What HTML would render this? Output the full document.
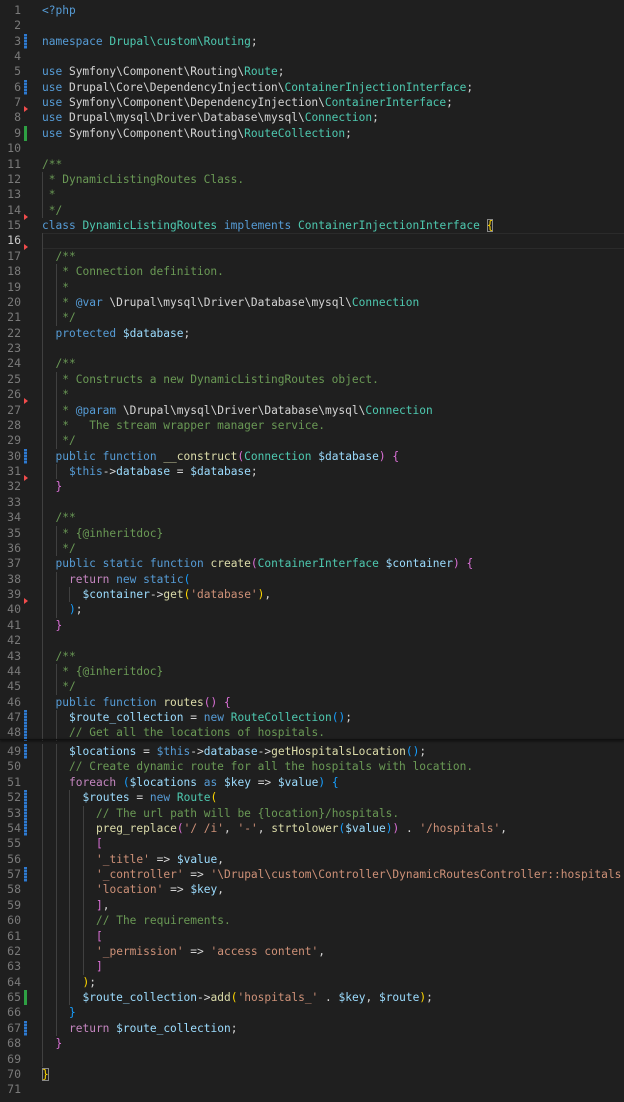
<!DOCTYPE html>
<html><head><meta charset="utf-8"><style>
html,body{margin:0;padding:0;background:#1f1f1f;width:624px;height:1102px;overflow:hidden;position:relative}
.blk{position:absolute;left:0;right:0}
.l{position:relative;height:15.38px;line-height:15.38px;font-family:"DejaVu Sans Mono","Liberation Mono",monospace;font-size:11.2px;white-space:pre;color:#d4d4d4}
.n{position:absolute;left:0;width:21px;text-align:right;color:#7a7a7a;font-size:11.5px}
.code{position:absolute;left:42px;top:0}
i{display:inline-block;height:15.38px;vertical-align:top;box-shadow:inset 1px 0 0 #404040}
i.g{width:13.5px}i.h{width:6.75px}
.k{color:#569cd6}.c{color:#4ec9b0}.m{color:#6a9955}.v{color:#9cdcfe}.f{color:#dcdcaa}.s{color:#ce9178}.p{color:#c586c0}
.y{color:#ffd700}.o{color:#da70d6}.b{color:#179fff}.w{color:#d4d4d4}
.bx{outline:1px solid #888;outline-offset:-1px}
.mk{position:absolute;left:24px;width:3px;height:15.38px;top:0}
.mb{background:repeating-linear-gradient(180deg,#2f7ad0 0 2px,#1f4a7a 2px 3px)}
.mg{background:#2ea043}
.tri{position:absolute;left:24px;width:0;height:0;border-left:4px solid #f14c4c;border-top:3px solid transparent;border-bottom:3px solid transparent}
.cur{position:absolute;left:42px;right:0;top:0;height:15.38px;box-sizing:border-box;border:1px solid #2b2b2b;border-right:none}
</style></head><body>
<div class="blk" style="top:2.8px">
<div class="l"><span class="n">1</span><span class="code"><span class="k">&lt;?php</span></span></div>
<div class="l"><span class="n">2</span></div>
<div class="l"><span class="n">3</span><span class="mk mb"></span><span class="code"><span class="k">namespace</span> <span class="c">Drupal\custom\Routing</span>;</span></div>
<div class="l"><span class="n">4</span></div>
<div class="l"><span class="n">5</span><span class="code"><span class="k">use</span> Symfony\Component\Routing\<span class="c">Route</span>;</span></div>
<div class="l"><span class="n">6</span><span class="mk mb"></span><span class="code"><span class="k">use</span> Drupal\Core\DependencyInjection\<span class="c">ContainerInjectionInterface</span>;</span></div>
<div class="l"><span class="n">7</span><span class="code"><span class="k">use</span> Symfony\Component\DependencyInjection\<span class="c">ContainerInterface</span>;</span><span class="tri" style="top:11px"></span></div>
<div class="l"><span class="n">8</span><span class="code"><span class="k">use</span> Drupal\mysql\Driver\Database\mysql\<span class="c">Connection</span>;</span></div>
<div class="l"><span class="n">9</span><span class="mk mg"></span><span class="code"><span class="k">use</span> Symfony\Component\Routing\<span class="c">RouteCollection</span>;</span></div>
<div class="l"><span class="n">10</span></div>
<div class="l"><span class="n">11</span><span class="code m">/**</span></div>
<div class="l"><span class="n">12</span><span class="code m"><i class="h"></i>* DynamicListingRoutes Class.</span></div>
<div class="l"><span class="n">13</span><span class="code m"><i class="h"></i>*</span></div>
<div class="l"><span class="n">14</span><span class="code m"><i class="h"></i>*/</span><span class="tri" style="top:11px"></span></div>
<div class="l"><span class="n">15</span><span class="code"><span class="k">class</span> <span class="c">DynamicListingRoutes</span> <span class="k">implements</span> <span class="c">ContainerInjectionInterface</span> <span class="y bx">{</span></span></div>
<div class="l"><span class="cur"></span><span class="n" style="color:#cccccc">16</span><span class="code"><i class="g"></i></span><span class="tri" style="top:11px"></span></div>
<div class="l"><span class="n">17</span><span class="code"><i class="g"></i><span class="m">/**</span></span></div>
<div class="l"><span class="n">18</span><span class="code"><i class="g"></i><i class="h"></i><span class="m">* Connection definition.</span></span></div>
<div class="l"><span class="n">19</span><span class="code"><i class="g"></i><i class="h"></i><span class="m">*</span></span></div>
<div class="l"><span class="n">20</span><span class="code"><i class="g"></i><i class="h"></i><span class="m">* </span><span class="k">@var</span> \Drupal\mysql\Driver\Database\mysql\<span class="c">Connection</span></span></div>
<div class="l"><span class="n">21</span><span class="code"><i class="g"></i><i class="h"></i><span class="m">*/</span></span></div>
<div class="l"><span class="n">22</span><span class="code"><i class="g"></i><span class="k">protected</span> <span class="v">$database</span>;</span></div>
<div class="l"><span class="n">23</span><span class="code"><i class="g"></i></span></div>
<div class="l"><span class="n">24</span><span class="code"><i class="g"></i><span class="m">/**</span></span></div>
<div class="l"><span class="n">25</span><span class="code"><i class="g"></i><i class="h"></i><span class="m">* Constructs a new DynamicListingRoutes object.</span></span></div>
<div class="l"><span class="n">26</span><span class="code"><i class="g"></i><i class="h"></i><span class="m">*</span></span><span class="tri" style="top:11px"></span></div>
<div class="l"><span class="n">27</span><span class="code"><i class="g"></i><i class="h"></i><span class="m">* </span><span class="k">@param</span> \Drupal\mysql\Driver\Database\mysql\<span class="c">Connection</span></span></div>
<div class="l"><span class="n">28</span><span class="code"><i class="g"></i><i class="h"></i><span class="m">*   The stream wrapper manager service.</span></span></div>
<div class="l"><span class="n">29</span><span class="code"><i class="g"></i><i class="h"></i><span class="m">*/</span></span></div>
<div class="l"><span class="n">30</span><span class="mk mb"></span><span class="code"><i class="g"></i><span class="k">public</span> <span class="k">function</span> <span class="f">__construct</span><span class="o">(</span><span class="c">Connection</span> <span class="v">$database</span><span class="o">)</span> <span class="o">{</span></span></div>
<div class="l"><span class="n">31</span><span class="code"><i class="g"></i><i class="g"></i><span class="k">$this</span>-&gt;<span class="v">database</span> = <span class="v">$database</span>;</span><span class="tri" style="top:11px"></span></div>
<div class="l"><span class="n">32</span><span class="code"><i class="g"></i><span class="o">}</span></span></div>
<div class="l"><span class="n">33</span><span class="code"><i class="g"></i></span></div>
<div class="l"><span class="n">34</span><span class="code"><i class="g"></i><span class="m">/**</span></span></div>
<div class="l"><span class="n">35</span><span class="code"><i class="g"></i><i class="h"></i><span class="m">* {@inheritdoc}</span></span></div>
<div class="l"><span class="n">36</span><span class="code"><i class="g"></i><i class="h"></i><span class="m">*/</span></span></div>
<div class="l"><span class="n">37</span><span class="code"><i class="g"></i><span class="k">public</span> <span class="k">static</span> <span class="k">function</span> <span class="f">create</span><span class="o">(</span><span class="c">ContainerInterface</span> <span class="v">$container</span><span class="o">)</span> <span class="o">{</span></span></div>
<div class="l"><span class="n">38</span><span class="code"><i class="g"></i><i class="g"></i><span class="p">return</span> <span class="k">new</span> <span class="k">static</span><span class="b">(</span></span></div>
<div class="l"><span class="n">39</span><span class="code"><i class="g"></i><i class="g"></i><i class="g"></i><span class="v">$container</span>-&gt;<span class="f">get</span><span class="y">(</span><span class="s">'database'</span><span class="y">)</span>,</span><span class="tri" style="top:11px"></span></div>
<div class="l"><span class="n">40</span><span class="code"><i class="g"></i><i class="g"></i><span class="b">)</span>;</span></div>
<div class="l"><span class="n">41</span><span class="code"><i class="g"></i><span class="o">}</span></span></div>
<div class="l"><span class="n">42</span><span class="code"><i class="g"></i></span></div>
<div class="l"><span class="n">43</span><span class="code"><i class="g"></i><span class="m">/**</span></span></div>
<div class="l"><span class="n">44</span><span class="code"><i class="g"></i><i class="h"></i><span class="m">* {@inheritdoc}</span></span></div>
<div class="l"><span class="n">45</span><span class="code"><i class="g"></i><i class="h"></i><span class="m">*/</span></span></div>
<div class="l"><span class="n">46</span><span class="code"><i class="g"></i><span class="k">public</span> <span class="k">function</span> <span class="f">routes</span><span class="o">()</span> <span class="o">{</span></span></div>
<div class="l"><span class="n">47</span><span class="mk mb"></span><span class="code"><i class="g"></i><i class="g"></i><span class="v">$route_collection</span> = <span class="k">new</span> <span class="c">RouteCollection</span><span class="b">()</span>;</span></div>
<div class="l"><span class="n">48</span><span class="mk mb"></span><span class="code"><i class="g"></i><i class="g"></i><span class="m">// Get all the locations of hospitals.</span></span></div>
</div>
<div style="position:absolute;left:0;right:0;top:739px;height:1px;background:#111;box-shadow:0 1px 2px #000"></div>
<div class="blk" style="top:744px">
<div class="l"><span class="n">49</span><span class="mk mb"></span><span class="code"><i class="g"></i><i class="g"></i><span class="v">$locations</span> = <span class="k">$this</span>-&gt;<span class="v">database</span>-&gt;<span class="f">getHospitalsLocation</span><span class="b">()</span>;</span></div>
<div class="l"><span class="n">50</span><span class="code"><i class="g"></i><i class="g"></i><span class="m">// Create dynamic route for all the hospitals with location.</span></span></div>
<div class="l"><span class="n">51</span><span class="code"><i class="g"></i><i class="g"></i><span class="p">foreach</span> <span class="b">(</span><span class="v">$locations</span> <span class="k">as</span> <span class="v">$key</span> =&gt; <span class="v">$value</span><span class="b">)</span> <span class="b">{</span></span></div>
<div class="l"><span class="n">52</span><span class="mk mb"></span><span class="code"><i class="g"></i><i class="g"></i><i class="g"></i><span class="v">$routes</span> = <span class="k">new</span> <span class="c">Route</span><span class="y">(</span></span></div>
<div class="l"><span class="n">53</span><span class="mk mb"></span><span class="code"><i class="g"></i><i class="g"></i><i class="g"></i><i class="g"></i><span class="m">// The url path will be {location}/hospitals.</span></span></div>
<div class="l"><span class="n">54</span><span class="mk mb"></span><span class="code"><i class="g"></i><i class="g"></i><i class="g"></i><i class="g"></i><span class="f">preg_replace</span><span class="o">(</span><span class="s">'/ /i'</span>, <span class="s">'-'</span>, <span class="f">strtolower</span><span class="b">(</span><span class="v">$value</span><span class="b">)</span><span class="o">)</span> . <span class="s">'/hospitals'</span>,</span></div>
<div class="l"><span class="n">55</span><span class="code"><i class="g"></i><i class="g"></i><i class="g"></i><i class="g"></i><span class="o">[</span></span></div>
<div class="l"><span class="n">56</span><span class="code"><i class="g"></i><i class="g"></i><i class="g"></i><i class="g"></i><span class="s">'_title'</span> =&gt; <span class="v">$value</span>,</span></div>
<div class="l"><span class="n">57</span><span class="mk mb"></span><span class="code"><i class="g"></i><i class="g"></i><i class="g"></i><i class="g"></i><span class="s">'_controller'</span> =&gt; <span class="s">'\Drupal\custom\Controller\DynamicRoutesController::hospitals'</span>,</span></div>
<div class="l"><span class="n">58</span><span class="code"><i class="g"></i><i class="g"></i><i class="g"></i><i class="g"></i><span class="s">'location'</span> =&gt; <span class="v">$key</span>,</span></div>
<div class="l"><span class="n">59</span><span class="code"><i class="g"></i><i class="g"></i><i class="g"></i><i class="g"></i><span class="o">]</span>,</span></div>
<div class="l"><span class="n">60</span><span class="code"><i class="g"></i><i class="g"></i><i class="g"></i><i class="g"></i><span class="m">// The requirements.</span></span></div>
<div class="l"><span class="n">61</span><span class="code"><i class="g"></i><i class="g"></i><i class="g"></i><i class="g"></i><span class="o">[</span></span></div>
<div class="l"><span class="n">62</span><span class="code"><i class="g"></i><i class="g"></i><i class="g"></i><i class="g"></i><span class="s">'_permission'</span> =&gt; <span class="s">'access content'</span>,</span></div>
<div class="l"><span class="n">63</span><span class="code"><i class="g"></i><i class="g"></i><i class="g"></i><i class="g"></i><span class="o">]</span></span></div>
<div class="l"><span class="n">64</span><span class="code"><i class="g"></i><i class="g"></i><i class="g"></i><span class="y">)</span>;</span></div>
<div class="l"><span class="n">65</span><span class="mk mg"></span><span class="code"><i class="g"></i><i class="g"></i><i class="g"></i><span class="v">$route_collection</span>-&gt;<span class="f">add</span><span class="y">(</span><span class="s">'hospitals_'</span> . <span class="v">$key</span>, <span class="v">$route</span><span class="y">)</span>;</span></div>
<div class="l"><span class="n">66</span><span class="code"><i class="g"></i><i class="g"></i><span class="b">}</span></span></div>
<div class="l"><span class="n">67</span><span class="mk mb"></span><span class="code"><i class="g"></i><i class="g"></i><span class="p">return</span> <span class="v">$route_collection</span>;</span></div>
<div class="l"><span class="n">68</span><span class="code"><i class="g"></i><span class="o">}</span></span></div>
<div class="l"><span class="n">69</span><span class="code"><i class="g"></i></span></div>
<div class="l"><span class="n">70</span><span class="code"><span class="y bx">}</span></span></div>
<div class="l"><span class="n">71</span></div>
</div>
</body></html>
